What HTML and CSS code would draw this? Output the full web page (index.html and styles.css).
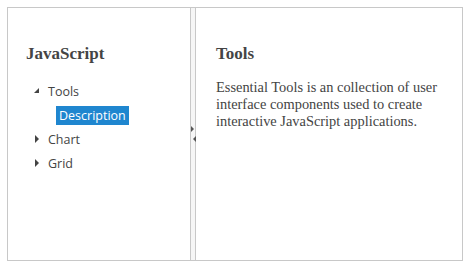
FILE: index.html
```html
<!DOCTYPE html>
<html>
<head>
<meta charset="utf-8">
<link rel="stylesheet" href="styles.css">
</head>
<body>
<div class="splitter">
  <div class="pane pane-left">
    <h3 class="title">JavaScript</h3>
    <ul class="tree">
      <li class="node">
        <div class="row"><span class="arrow arrow-down"></span><span class="label">Tools</span></div>
        <ul class="tree sub">
          <li class="node"><div class="row"><span class="label selected">Description</span></div></li>
        </ul>
      </li>
      <li class="node"><div class="row"><span class="arrow arrow-right"></span><span class="label">Chart</span></div></li>
      <li class="node"><div class="row"><span class="arrow arrow-right"></span><span class="label">Grid</span></div></li>
    </ul>
  </div>
  <div class="bar">
    <span class="bar-arrow r"></span>
    <span class="bar-arrow l"></span>
  </div>
  <div class="pane pane-right">
    <h3 class="title">Tools</h3>
    <p class="text">Essential Tools is an collection of user interface components used to create interactive JavaScript applications.</p>
  </div>
</div>
</body>
</html>
```
FILE: styles.css
```css
html, body { margin: 0; padding: 0; background: #fff; }
body { padding: 7px; }
.splitter {
  display: flex;
  width: 454px;
  height: 252px;
  border: 1px solid #c8c8c8;
}
.pane { box-sizing: border-box; }
.pane-left { width: 182px; padding: 36px 0 0 18px; }
.pane-right { flex: 1; padding: 36px 0 0 20px; }
.title {
  margin: 0;
  font-family: "Liberation Serif", serif;
  font-weight: bold;
  font-size: 17px;
  color: #444;
  line-height: 20px;
}
.tree { list-style: none; margin: 0; padding: 0; }
.pane-left > .tree { margin-top: 15px; padding-left: 7px; }
.sub { padding-left: 23px; }
.row {
  display: flex;
  align-items: center;
  height: 24px;
  font-family: "Open Sans", "Noto Sans", sans-serif;
  font-size: 12.5px;
  color: #444;
}
.arrow { width: 14px; height: 12px; position: relative; flex: none; }
.arrow-down::before {
  content: ""; position: absolute; left: 1px; top: 3px;
  border-left: 5px solid transparent;
  border-bottom: 5px solid #444;
}
.arrow-right::before {
  content: ""; position: absolute; left: 2px; top: 2px;
  border-top: 4px solid transparent;
  border-bottom: 4px solid transparent;
  border-left: 4px solid #444;
}
.label { padding: 1px 1px; line-height: 17px; }
.selected {
  background: #1f86cf;
  color: #fff;
  padding: 0 3px;
  line-height: 19px;
}
.bar {
  width: 4px;
  border-left: 1px solid #c8c8c8;
  border-right: 1px solid #c8c8c8;
  background: #f6f6f6;
  display: flex;
  flex-direction: column;
  justify-content: center;
  align-items: center;
  gap: 4px;
  box-sizing: content-box;
}
.bar-arrow { width: 0; height: 0; }
.bar-arrow.r {
  border-top: 3px solid transparent;
  border-bottom: 3px solid transparent;
  border-left: 3px solid #555;
  margin-right: 1px;
}
.bar-arrow.l {
  border-top: 3px solid transparent;
  border-bottom: 3px solid transparent;
  border-right: 3px solid #555;
  margin-left: 2px;
}
.text {
  margin: 15px 0 0;
  font-family: "Liberation Serif", serif;
  font-size: 14.4px;
  line-height: 17px;
  color: #444;
  width: 235px;
}
```
